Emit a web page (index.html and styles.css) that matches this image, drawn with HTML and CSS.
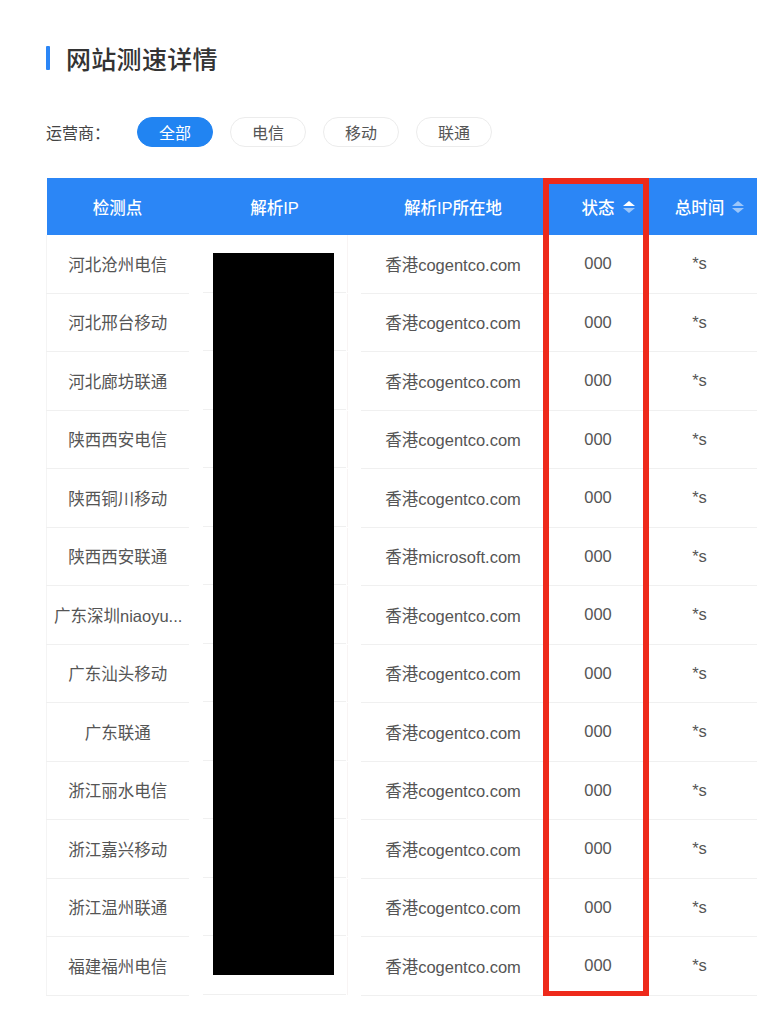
FILE: index.html
```html
<!DOCTYPE html>
<html lang="zh-CN">
<head>
<meta charset="utf-8">
<title>网站测速详情</title>
<link rel="stylesheet" href="styles.css">
</head>
<body>
<div class="page">
  <h2 class="title"><span class="title-bar"></span>网站测速详情</h2>

  <div class="filter">
    <span class="filter-label">运营商：</span>
    <div class="pills">
      <span class="pill active">全部</span>
      <span class="pill">电信</span>
      <span class="pill">移动</span>
      <span class="pill">联通</span>
    </div>
  </div>

  <div class="table-wrap">
    <table class="speed">
      <colgroup>
        <col class="c1"><col class="c2"><col class="c3"><col class="c4"><col class="c5"><col class="c6">
      </colgroup>
      <thead>
        <tr>
          <th>检测点</th>
          <th>解析IP</th>
          <th>解析IP所在地</th>
          <th><span class="sortable">状态<span class="sort up-on"><i class="up"></i><i class="down"></i></span></span></th>
          <th><span class="sortable">总时间<span class="sort"><i class="up"></i><i class="down"></i></span></span></th>
          <th></th>
        </tr>
      </thead>
      <tbody>
        <tr><td>河北沧州电信</td><td class="ip"></td><td>香港cogentco.com</td><td>000</td><td>*s</td><td></td></tr>
        <tr><td>河北邢台移动</td><td class="ip"></td><td>香港cogentco.com</td><td>000</td><td>*s</td><td></td></tr>
        <tr><td>河北廊坊联通</td><td class="ip"></td><td>香港cogentco.com</td><td>000</td><td>*s</td><td></td></tr>
        <tr><td>陕西西安电信</td><td class="ip"></td><td>香港cogentco.com</td><td>000</td><td>*s</td><td></td></tr>
        <tr><td>陕西铜川移动</td><td class="ip"></td><td>香港cogentco.com</td><td>000</td><td>*s</td><td></td></tr>
        <tr><td>陕西西安联通</td><td class="ip"></td><td>香港microsoft.com</td><td>000</td><td>*s</td><td></td></tr>
        <tr><td class="ellipsis">广东深圳niaoyu...</td><td class="ip"></td><td>香港cogentco.com</td><td>000</td><td>*s</td><td></td></tr>
        <tr><td>广东汕头移动</td><td class="ip"></td><td>香港cogentco.com</td><td>000</td><td>*s</td><td></td></tr>
        <tr><td>广东联通</td><td class="ip"></td><td>香港cogentco.com</td><td>000</td><td>*s</td><td></td></tr>
        <tr><td>浙江丽水电信</td><td class="ip"></td><td>香港cogentco.com</td><td>000</td><td>*s</td><td></td></tr>
        <tr><td>浙江嘉兴移动</td><td class="ip"></td><td>香港cogentco.com</td><td>000</td><td>*s</td><td></td></tr>
        <tr><td>浙江温州联通</td><td class="ip"></td><td>香港cogentco.com</td><td>000</td><td>*s</td><td></td></tr>
        <tr><td>福建福州电信</td><td class="ip"></td><td>香港cogentco.com</td><td>000</td><td>*s</td><td></td></tr>
      </tbody>
    </table>
    <div class="redact"></div>
    <div class="highlight"></div>
  </div>
</div>
</body>
</html>
```

FILE: styles.css
```css
html, body {
  margin: 0;
  padding: 0;
  background: #fff;
  overflow: hidden;
}

body {
  width: 757px;
  height: 1024px;
  font-family: "Liberation Sans", "Noto Sans CJK SC", sans-serif;
  color: #555;
}

.page {
  padding: 41px 0 0 46px;
}

.title {
  display: flex;
  align-items: center;
  gap: 16px;
  margin: 0;
  height: 34px;
  font-family: "Noto Sans CJK SC", sans-serif;
  font-size: 25px;
  font-weight: 500;
  color: #333;
  letter-spacing: 0.3px;
}

.title-bar {
  width: 4px;
  height: 24px;
  background: #2b86f6;
  border-radius: 1px;
}

.filter {
  display: flex;
  align-items: center;
  margin-top: 42px;
  height: 30px;
}

.filter-label {
  font-family: "Noto Sans CJK SC", sans-serif;
  font-size: 16px;
  color: #444;
  width: 91px;
}

.pills {
  display: flex;
  gap: 17px;
}

.pill {
  box-sizing: border-box;
  width: 76px;
  height: 30px;
  border: 1px solid #ececec;
  border-radius: 15px;
  display: flex;
  align-items: center;
  justify-content: center;
  font-family: "Noto Sans CJK SC", sans-serif;
  font-size: 16px;
  color: #555;
  background: #fff;
}

.pill.active {
  background: #2184f2;
  border-color: #2184f2;
  color: #fff;
}

.table-wrap {
  position: relative;
  margin-top: 31px;
  width: 711px;
  overflow: hidden;
}

.speed {
  border-collapse: collapse;
  table-layout: fixed;
  width: 711px;
}

.c1 { width: 142px; }
.c2 { width: 172px; }
.c3 { width: 185px; }
.c4 { width: 105px; }
.c5 { width: 98px; }
.c6 { width: 9px; }

.speed thead th {
  height: 57px;
  padding: 0;
  background: #2b86f6;
  color: #fff;
  font-family: "Liberation Sans", "Noto Sans CJK SC", sans-serif;
  font-size: 16.5px;
  font-weight: 500;
  text-align: center;
  white-space: nowrap;
}

.sortable {
  position: relative;
  display: inline-block;
}

.sort {
  position: absolute;
  left: 100%;
  top: 50%;
  margin-left: 8px;
  margin-top: -6px;
  display: flex;
  flex-direction: column;
  gap: 2px;
}

.sort i {
  display: block;
  width: 0;
  height: 0;
  border-left: 6px solid transparent;
  border-right: 6px solid transparent;
}

.sort .up { border-bottom: 5px solid #9cc6fa; }
.sort .down { border-top: 5px solid #9cc6fa; }
.sort.up-on .up { border-bottom-color: #fff; }

.speed tbody td {
  height: 57.5px;
  padding: 0;
  text-align: center;
  font-size: 16.5px;
  color: #555;
  border-bottom: 1px solid #f0f0f0;
  white-space: nowrap;
  overflow: hidden;
}

.speed tbody td:first-child {
  border-left: 1px solid #f4f4f4;
}

.speed tbody td.ip {
  border-bottom: 1px solid #fff;
  background: linear-gradient(#f0f0f0, #f0f0f0) no-repeat left 14px bottom 0 / 143px 1px;
  box-shadow: inset -13px 0 0 #fff, inset -14px 0 0 #f8f4f4;
}

.speed tbody td.ellipsis {
  text-align: left;
  padding-left: 7px;
}

.redact {
  position: absolute;
  left: 167px;
  top: 75px;
  width: 121px;
  height: 722px;
  background: #000;
}

.highlight {
  position: absolute;
  left: 497px;
  top: 0;
  width: 106px;
  height: 819px;
  box-sizing: border-box;
  border: 6px solid #ee2a1b;
}
```
